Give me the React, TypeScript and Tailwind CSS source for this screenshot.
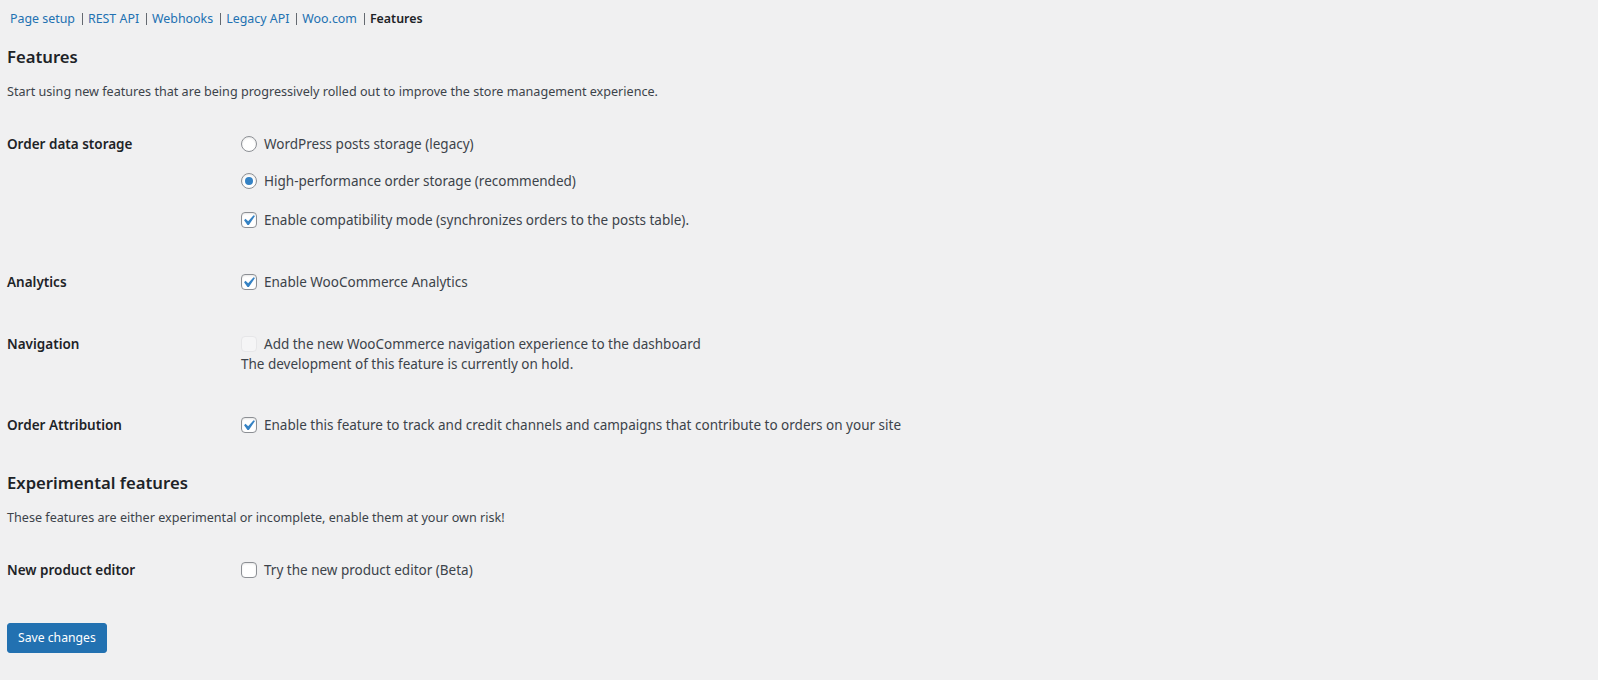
import React from "react";

const Check = () => (
  <span className="relative inline-block w-4 h-4 shrink-0 rounded-[4px] border border-[#8c8f94] bg-white shadow-[inset_0_1px_2px_rgba(0,0,0,0.1)]">
    <svg
      viewBox="0 0 20 20"
      className="absolute left-[-4px] top-[-3px] w-[21px] h-[21px]"
    >
      <path fill="#3582c4" d="M14.83 4.89l1.34.94-5.81 8.38H9.02L5.78 9.67l1.34-1.25 2.57 2.4z" />
    </svg>
  </span>
);

const EmptyCheck = ({ disabled }: { disabled?: boolean }) => (
  <span
    className={
      disabled
        ? "inline-block w-4 h-4 shrink-0 rounded-[4px] border border-[#e6e6e8] bg-[#f5f5f6]"
        : "inline-block w-4 h-4 shrink-0 rounded-[4px] border border-[#8c8f94] bg-white shadow-[inset_0_1px_2px_rgba(0,0,0,0.1)]"
    }
  />
);

const Radio = ({ checked }: { checked?: boolean }) => (
  <span className="inline-flex items-center justify-center w-4 h-4 shrink-0 rounded-full border border-[#8c8f94] bg-white shadow-[inset_0_1px_2px_rgba(0,0,0,0.1)]">
    {checked && <span className="w-2 h-2 rounded-full bg-[#3582c4]" />}
  </span>
);

const Option = ({ control, text }: { control: React.ReactNode; text: string }) => (
  <div className="flex items-center gap-[7px] h-5">
    {control}
    <span>{text}</span>
  </div>
);

const Sep = () => <span className="inline-block w-px h-[12px] bg-[#646970] ml-[7px] mr-[5px]" />;

const Label = ({ children }: { children: React.ReactNode }) => (
  <div className="font-semibold text-[#1d2327]">{children}</div>
);

export default function App() {
  return (
    <div className="min-h-screen bg-[#f0f0f1] text-[#3c434a] text-[12.6px] leading-5 font-['Noto_Sans',sans-serif] pl-[7px]">
      <nav className="pt-[9px] pl-[3px] flex items-center h-[29px] box-border text-[12.4px]">
        <a className="text-[#2271b1]">Page setup</a>
        <Sep />
        <a className="text-[#2271b1]">REST API</a>
        <Sep />
        <a className="text-[#2271b1]">Webhooks</a>
        <Sep />
        <a className="text-[#2271b1]">Legacy API</a>
        <Sep />
        <a className="text-[#2271b1]">Woo.com</a>
        <Sep />
        <span className="font-semibold text-[#1d2327]">Features</span>
      </nav>

      <h2 className="mt-[16px] text-[16.7px] leading-6 font-semibold text-[#1d2327]">Features</h2>
      <p className="mt-[13px]">
        Start using new features that are being progressively rolled out to improve the store management experience.
      </p>

      <div className="text-[13.5px]">
        <div className="grid grid-cols-[234px_1fr] mt-[32px]">
          <Label>Order data storage</Label>
          <div className="flex flex-col">
            <Option control={<Radio />} text="WordPress posts storage (legacy)" />
            <div className="mt-[17px]">
              <Option control={<Radio checked />} text="High-performance order storage (recommended)" />
            </div>
            <div className="mt-[19px]">
              <Option control={<Check />} text="Enable compatibility mode (synchronizes orders to the posts table)." />
            </div>
          </div>
        </div>

        <div className="grid grid-cols-[234px_1fr] mt-[42px]">
          <Label>Analytics</Label>
          <Option control={<Check />} text="Enable WooCommerce Analytics" />
        </div>

        <div className="grid grid-cols-[234px_1fr] mt-[42px]">
          <Label>Navigation</Label>
          <div>
            <Option control={<EmptyCheck disabled />} text="Add the new WooCommerce navigation experience to the dashboard" />
            <p>The development of this feature is currently on hold.</p>
          </div>
        </div>

        <div className="grid grid-cols-[234px_1fr] mt-[41px]">
          <Label>Order Attribution</Label>
          <Option
            control={<Check />}
            text="Enable this feature to track and credit channels and campaigns that contribute to orders on your site"
          />
        </div>
      </div>

      <h2 className="mt-[36px] text-[16.7px] leading-6 font-semibold text-[#1d2327]">Experimental features</h2>
      <p className="mt-[13px]">These features are either experimental or incomplete, enable them at your own risk!</p>

      <div className="grid grid-cols-[234px_1fr] mt-[32px] text-[13.5px]">
        <Label>New product editor</Label>
        <Option control={<EmptyCheck />} text="Try the new product editor (Beta)" />
      </div>

      <button className="mt-[43px] h-[30px] px-[10px] rounded-[3px] bg-[#2271b1] border border-[#2271b1] text-white text-[12.2px] leading-[28px]">
        Save changes
      </button>
    </div>
  );
}
